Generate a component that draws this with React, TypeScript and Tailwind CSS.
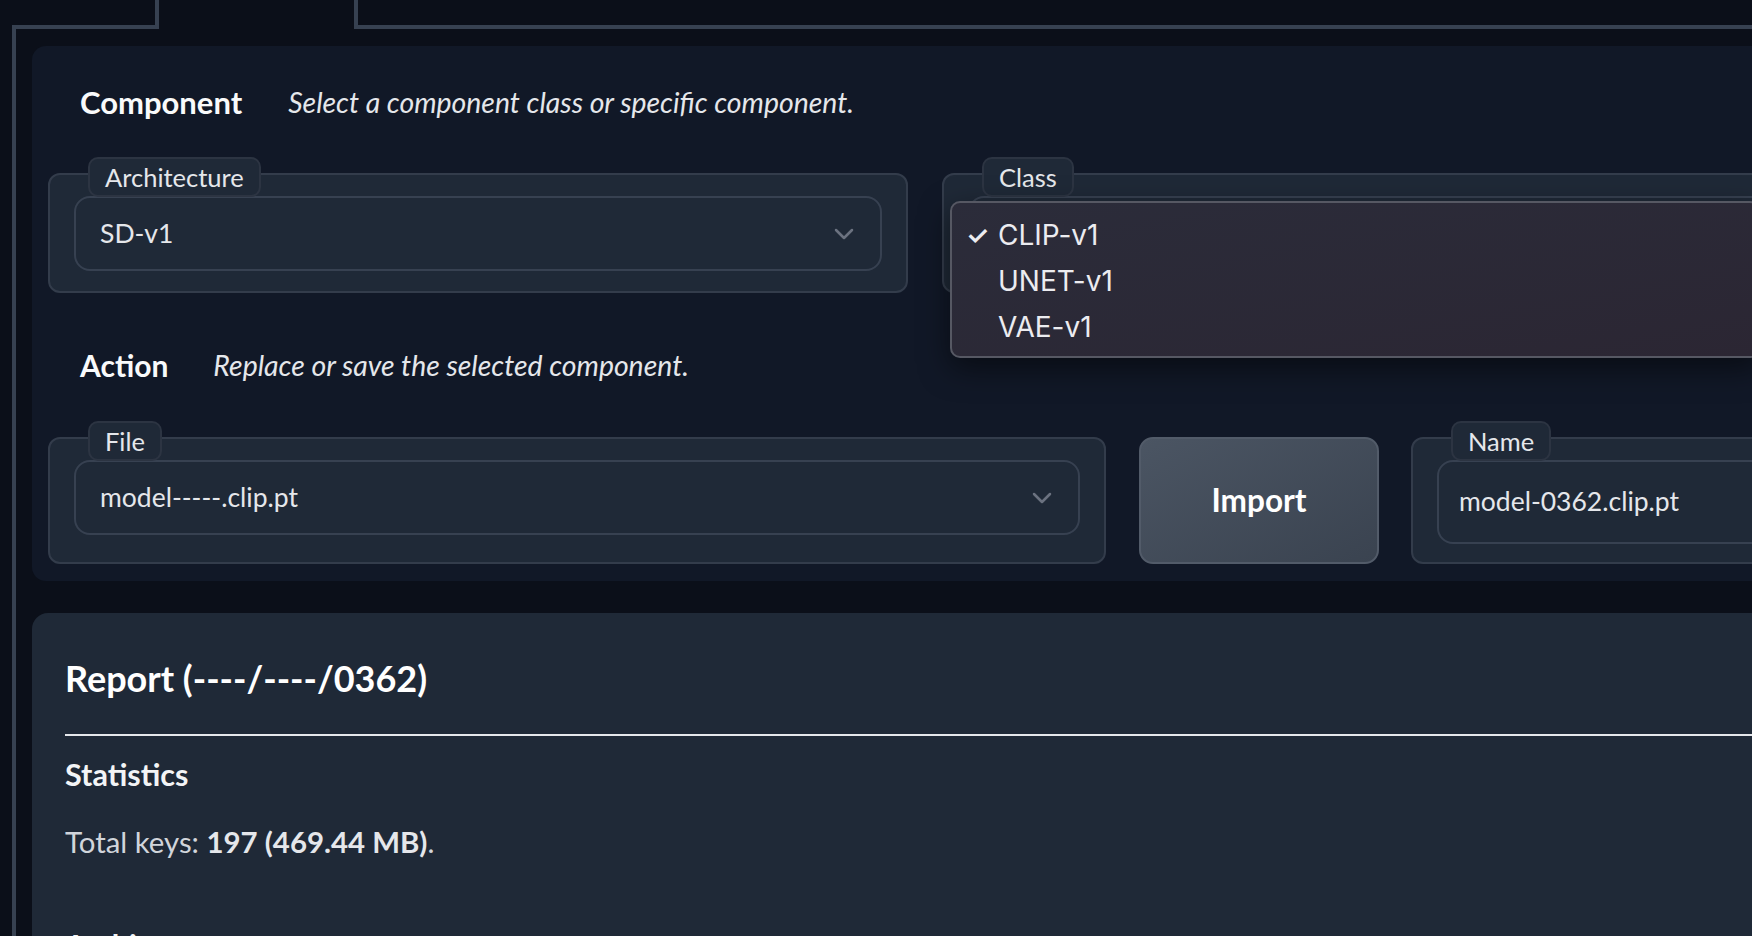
import React from 'react'

const font = { fontFamily: 'Lato, "Noto Sans", sans-serif' }

function Chevron() {
  return (
    <svg width="20" height="12" viewBox="0 0 20 12" fill="none">
      <path d="M2 2l8 8 8-8" stroke="#6b7280" strokeWidth="2.5" strokeLinecap="round" strokeLinejoin="round" />
    </svg>
  )
}

function BlockLabel({ text }: { text: string }) {
  return (
    <div className="absolute left-[38px] top-[-18px] h-[40px] px-[15px] flex items-center rounded-[10px] border-2 border-[#2c3442] bg-[#1f2937] text-[25.5px] text-[#e5e7eb]">
      {text}
    </div>
  )
}

function SelectBlock({ label, value, width, height }: { label: string; value: string; width: string; height: string }) {
  return (
    <div className={`relative shrink-0 ${width} ${height} rounded-[12px] border-2 border-[#333c4b] bg-[#1f2937] px-[24px] pt-[21px]`}>
      <BlockLabel text={label} />
      <div className="h-[75px] rounded-[16px] border-2 border-[#374151] bg-[#1f2937] flex items-center justify-between pl-[24px] pr-[26px]">
        <span className="text-[26.5px] text-[#e5e7eb]">{value}</span>
        <Chevron />
      </div>
    </div>
  )
}

export default function App() {
  return (
    <div className="w-[1752px] h-[936px] overflow-hidden bg-[#0b0f19] text-white" style={font}>
      {/* tabs */}
      <div className="flex h-[29px] w-[2000px]">
        <div className="w-[12px]" />
        <div className="w-[143px] border-b-4 border-[#374151]" />
        <div className="w-[203px] border-x-4 border-[#374151]" />
        <div className="flex-1 border-b-4 border-[#374151]" />
      </div>

      <div className="ml-[12px] border-l-4 border-[#374151] pl-[16px] pt-[17px] w-[2000px] h-[920px]">
        {/* form panel */}
        <div className="rounded-tl-[14px] rounded-bl-[14px] bg-[#111827] px-[16px] pt-[38px] pb-[17px]">
          <div className="flex items-center h-[36px] pl-[32px]">
            <span className="text-[31px] font-bold text-[#f9fafb]">Component</span>
            <span className="ml-[46px] text-[28.4px] italic text-[#e5e7eb]">Select a component class or specific component.</span>
          </div>

          <div className="mt-[53px] flex gap-[34px]">
            <SelectBlock label="Architecture" value="SD-v1" width="w-[860px]" height="h-[120px]" />
            <div className="relative shrink-0 w-[860px] h-[120px] rounded-[12px] border-2 border-[#333c4b] bg-[#1f2937] px-[24px] pt-[21px]">
              <BlockLabel text="Class" />
              <div className="h-[75px] rounded-[16px] border-2 border-[#374151] bg-[#1f2937]" />
              {/* open dropdown */}
              <div
                className="absolute left-[6px] top-[26px] w-[810px] h-[157px] rounded-[10px] border-2 border-[#565863] bg-gradient-to-br from-[#2b2c3a] to-[#2b2633] shadow-[0_10px_30px_rgba(0,0,0,0.5)] pt-[9px] z-10"
                style={{ fontFamily: 'Inter, "Noto Sans", sans-serif' }}
              >
                {[
                  ['CLIP-v1', true],
                  ['UNET-v1', false],
                  ['VAE-v1', false],
                ].map(([t, sel]) => (
                  <div key={t as string} className="flex items-center h-[46px] text-[28px] text-[#ececf0]">
                    <span className="w-[46px] pl-[14px] text-[26px] font-semibold">{sel ? '✓' : ''}</span>
                    <span>{t as string}</span>
                  </div>
                ))}
              </div>
            </div>
          </div>

          <div className="mt-[54px] flex items-center h-[36px] pl-[32px]">
            <span className="text-[30px] font-bold text-[#f9fafb]">Action</span>
            <span className="ml-[45px] text-[28.4px] italic text-[#e5e7eb]">Replace or save the selected component.</span>
          </div>

          <div className="mt-[54px] flex">
            <SelectBlock label="File" value="model-----.clip.pt" width="w-[1058px]" height="h-[127px]" />
            <button className="ml-[33px] shrink-0 w-[240px] h-[127px] rounded-[14px] border-2 border-[#525b69] bg-gradient-to-br from-[#4b5563] to-[#3a4350] text-[31.5px] font-bold text-white">
              Import
            </button>
            <div className="relative ml-[32px] shrink-0 w-[1058px] h-[127px] rounded-[12px] border-2 border-[#333c4b] bg-[#1f2937] px-[24px] pt-[21px]">
              <BlockLabel text="Name" />
              <div className="h-[84px] rounded-[16px] border-2 border-[#374151] bg-[#1f2937] flex items-center pl-[20px]">
                <span className="text-[26.5px] text-[#e5e7eb]">model-0362.clip.pt</span>
              </div>
            </div>
          </div>
        </div>

        {/* report panel */}
        <div className="mt-[32px] rounded-tl-[16px] bg-[#1f2937] pl-[33px] pt-[41px] h-[400px]">
          <div className="h-[48px] flex items-center text-[36px] font-bold text-white">Report (----/----/0362)</div>
          <div className="mt-[32px] h-[2px] bg-[#e5e7eb]" />
          <div className="mt-[21px] h-[36px] flex items-center text-[30.5px] font-bold text-[#f3f4f6]">Statistics</div>
          <div className="mt-[31px] h-[36px] flex items-center text-[29.4px] text-[#d1d5db]">
            Total keys:&nbsp;<span className="font-bold text-[#e5e7eb]">197 (469.44 MB)</span>.
          </div>
          <div className="mt-[68px] h-[36px] flex items-center text-[30.5px] font-bold text-[#f3f4f6]">Architecture</div>
        </div>
      </div>
    </div>
  )
}
